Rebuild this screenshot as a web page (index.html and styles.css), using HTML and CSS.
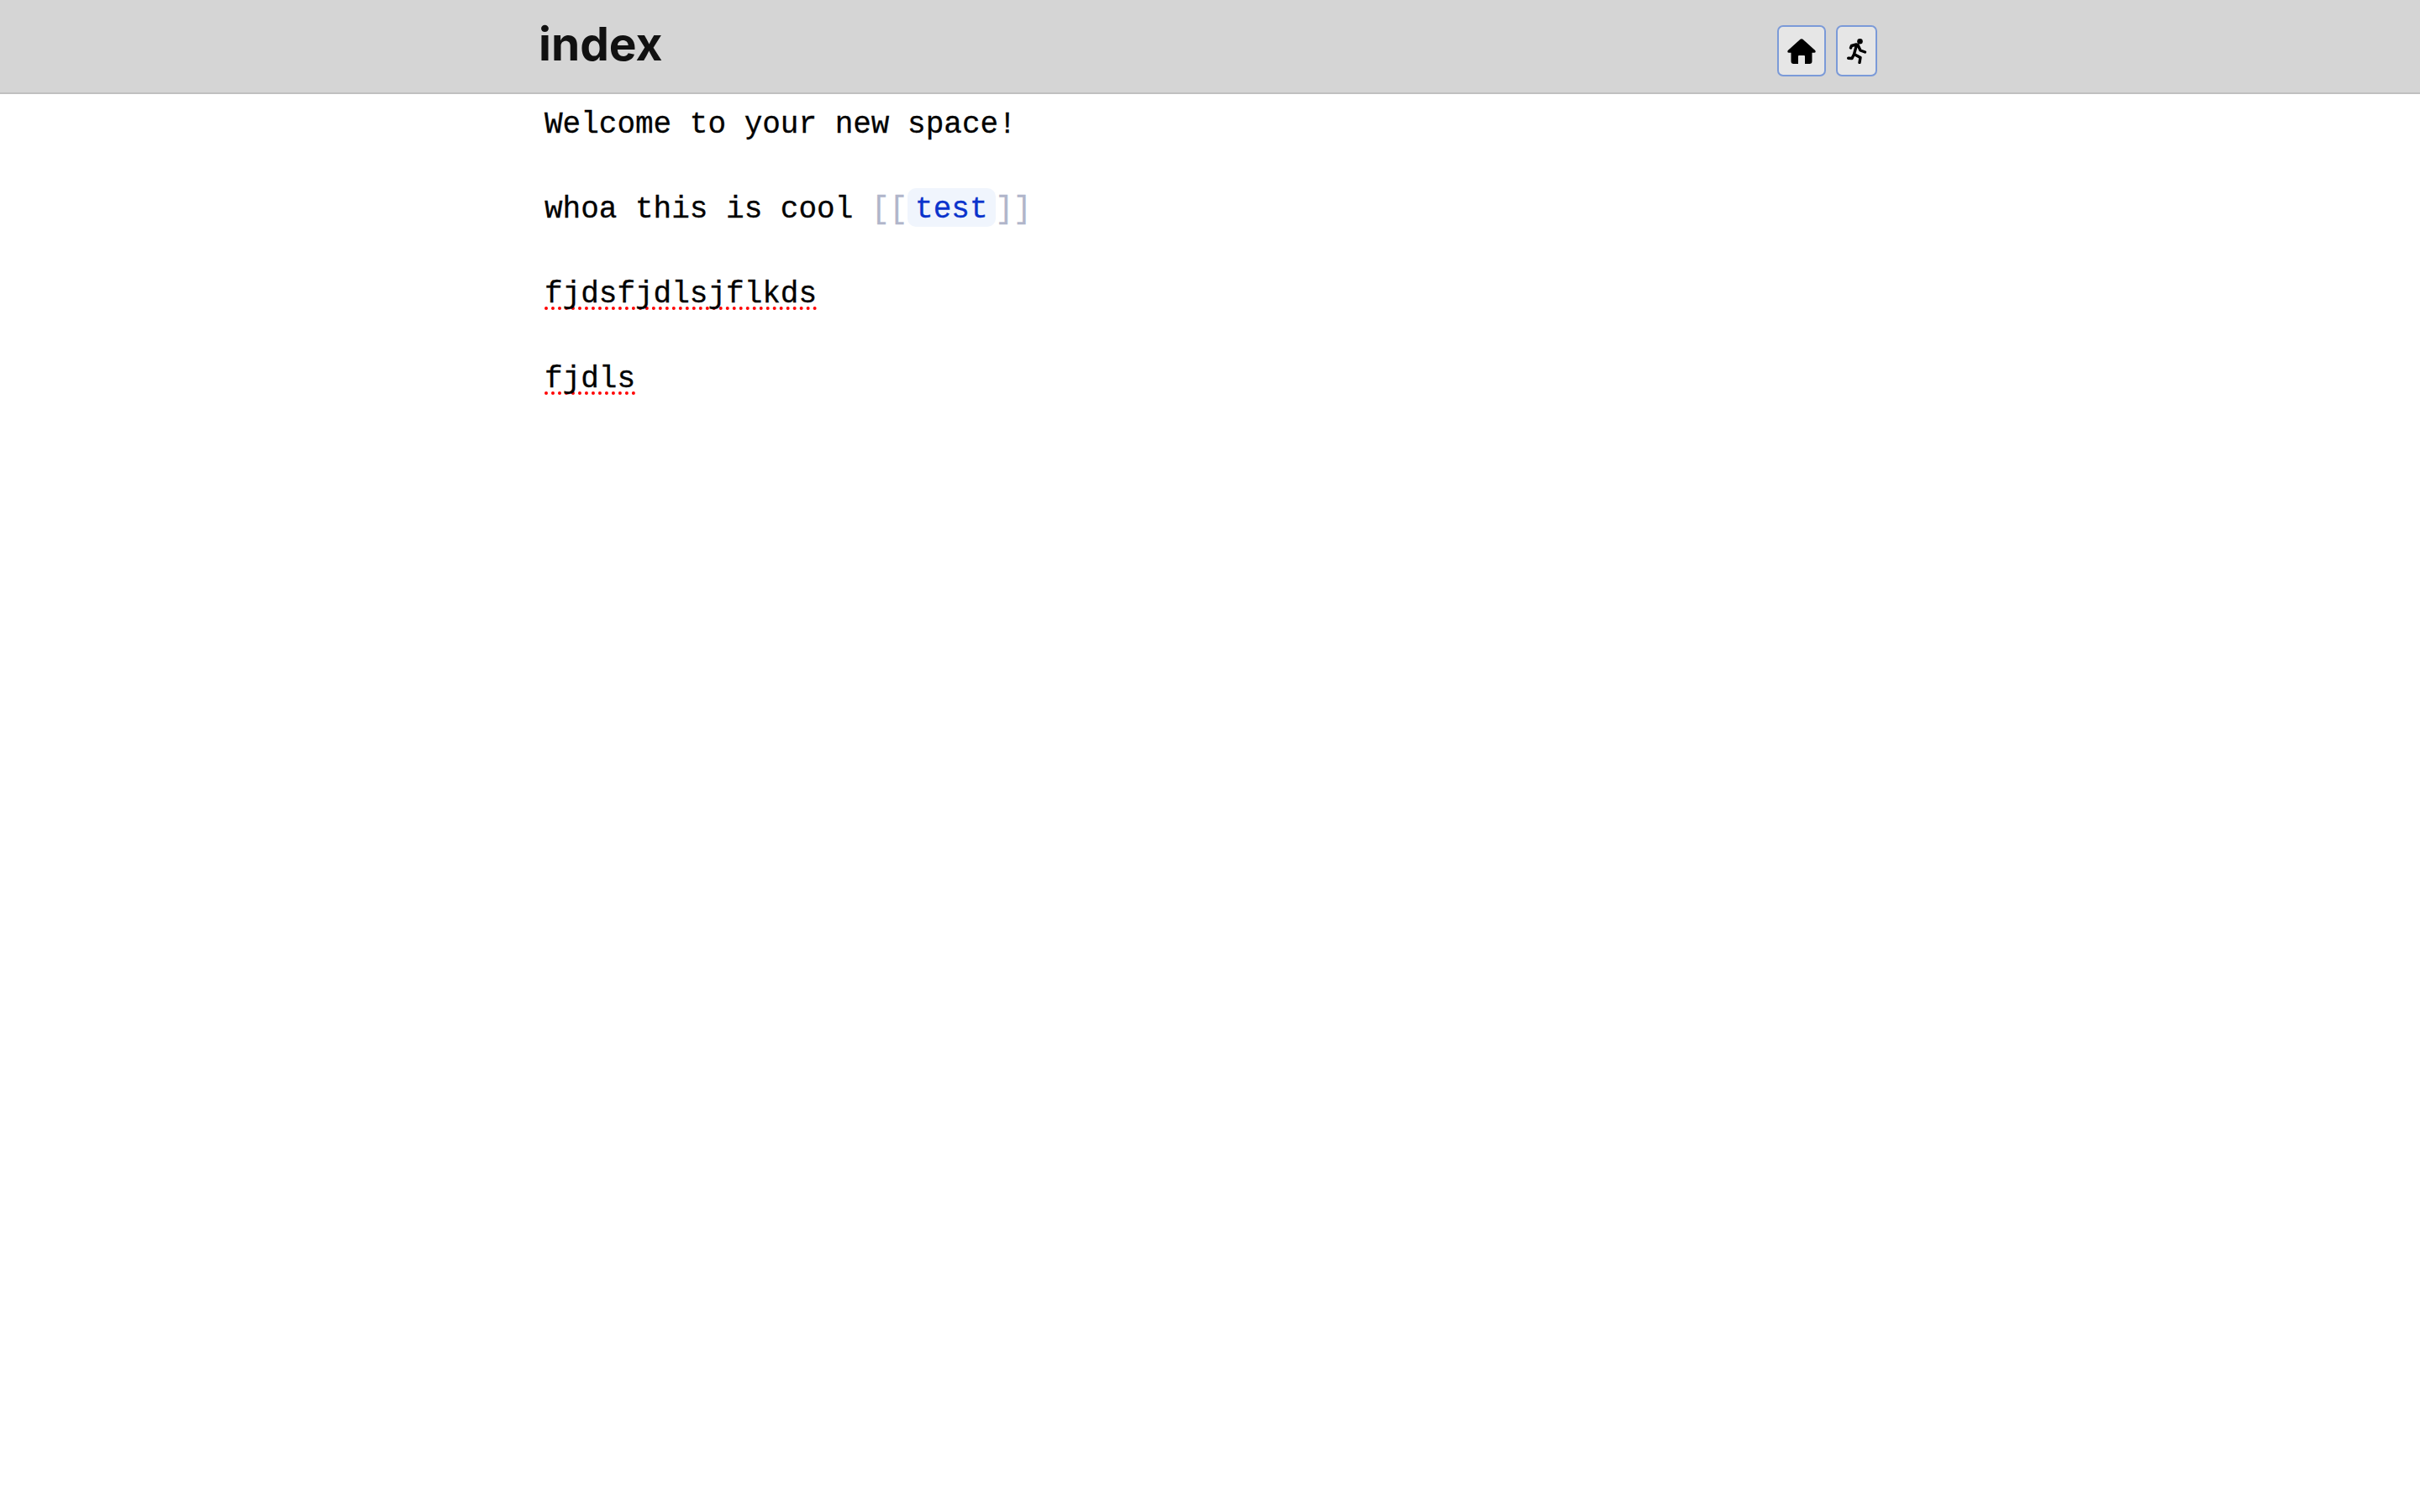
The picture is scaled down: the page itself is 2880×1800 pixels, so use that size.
FILE: index.html
```html
<!DOCTYPE html>
<html lang="en">
<head>
<meta charset="utf-8">
<title>index</title>
<link rel="stylesheet" href="styles.css">
</head>
<body>
<header class="top-bar">
  <div class="top-inner">
    <h1 class="page-name">index</h1>
    <div class="actions">
      <button class="action home" type="button" aria-label="Home">
        <svg width="34" height="30" viewBox="0 0 34 30"><path d="M15.5 .8 Q17 -.2 18.5 .8 L33.2 14 Q34.6 16.6 32 16.8 L29.5 16.8 L29.5 27 Q29.5 30 26.5 30 L21 30 L21 21 Q21 20 20 20 L14 20 Q13 20 13 21 L13 30 L7.5 30 Q4.5 30 4.5 27 L4.5 16.8 L2 16.8 Q-.6 16.6 .8 14 Z" fill="#000"/></svg>
      </button>
      <button class="action run" type="button" aria-label="Run">
        <svg width="24" height="30" viewBox="0 0 24 30"><circle cx="15.5" cy="3.3" r="3.3" fill="#000"/><path d="M4.5 11 L5.5 8.5 L11 7 L13 7.5 L16 14 L21.5 16 M11.5 7.5 L8.5 18.5 L16 22.5 L15 28.5 M8 19.5 L6 23.5 L1.7 23.2" fill="none" stroke="#000" stroke-width="3.4" stroke-linecap="round" stroke-linejoin="round"/></svg>
      </button>
    </div>
  </div>
</header>
<main class="editor">
  <p class="line">Welcome to your new space!</p>
  <p class="line">whoa this is cool <span class="bracket">[[</span><a class="wiki" href="#">test</a><span class="bracket">]]</span></p>
  <p class="line"><span class="misspelled">fjdsfjdlsjflkds</span></p>
  <p class="line"><span class="misspelled">fjdls</span></p>
</main>
</body>
</html>
```
FILE: styles.css
```css
* { box-sizing: border-box; }
html, body { margin: 0; padding: 0; background: #fff; }
body { min-height: 1800px; }
.top-bar {
  height: 112px;
  background: #d5d5d5;
  border-bottom: 2px solid #c0c0c0;
  padding-left: 641px;
}
.top-inner {
  width: 1593px;
  height: 110px;
  display: flex;
  justify-content: space-between;
  align-items: flex-start;
}
.page-name {
  margin: 19px 0 0;
  font: 700 55px/66px Inter, "Liberation Sans", sans-serif;
  color: #111;
}
.actions { display: flex; gap: 12px; margin-top: 30px; }
.action {
  padding: 0;
  background: #e6e6e6;
  border: 2px solid #7b9ad8;
  border-radius: 7px;
  height: 61px;
  display: flex;
  align-items: center;
  justify-content: center;
}
.home { width: 58px; }
.run { width: 49px; }
.editor { padding: 0 0 0 648px; }
.line {
  margin: 0;
  height: 101px;
  padding-top: 12px;
  font: 400 36px/50px "Liberation Mono", monospace;
  color: #000;
  -webkit-text-stroke: 0.3px currentColor;
}
.bracket { color: #b0b5ca; }
.wiki {
  color: #0a33cc;
  text-decoration: none;
  background: #f0f5fd;
  border-radius: 10px;
  padding: 5px 9px 0;
}
.misspelled {
  text-decoration: underline dotted #f00 4px;
  text-decoration-skip-ink: none;
  text-underline-offset: 5px;
}
```
